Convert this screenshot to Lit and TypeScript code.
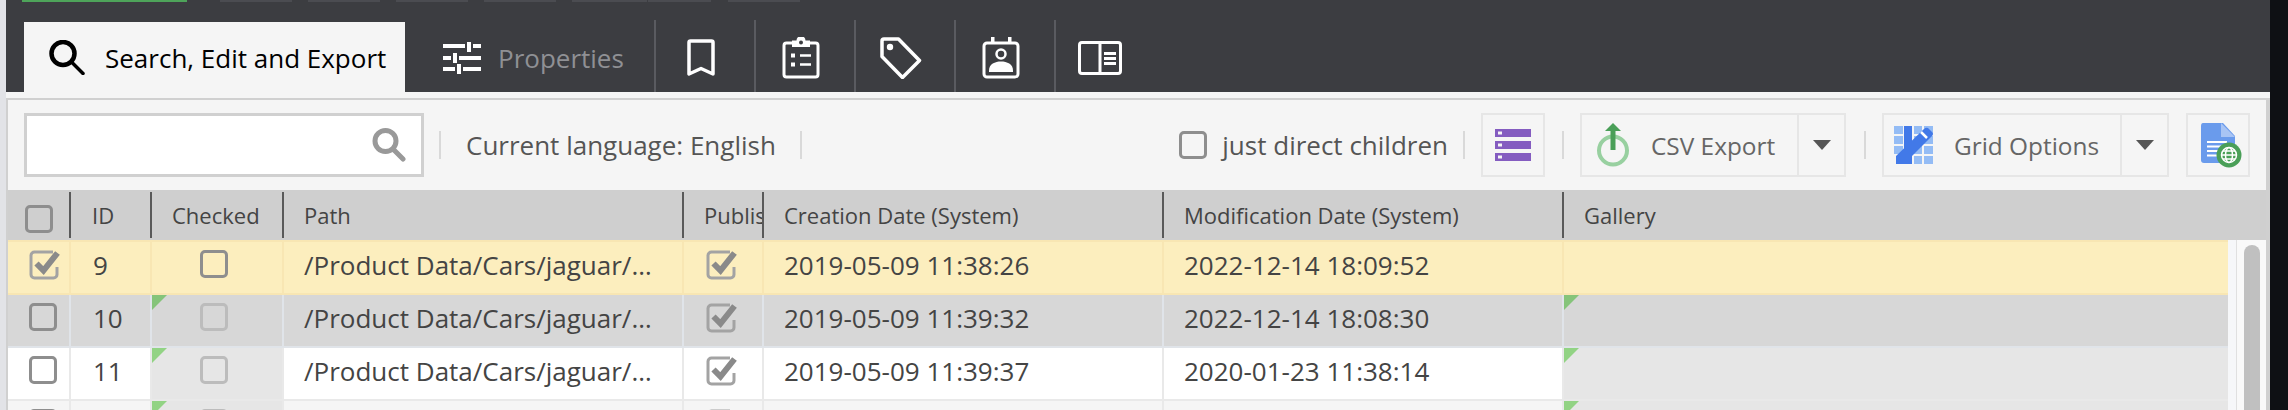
import { LitElement, html, css, nothing } from "lit";
import { customElement } from "lit/decorators.js";

const checkMark = html`<svg class="checkmark" viewBox="0 0 36 30" width="36" height="30">
  <path d="M24 2H5.5A3.5 3.5 0 0 0 2 5.500V24.500A3.500 3.500 0 0 0 5.500 28H24.500A3.500 3.500 0 0 0 28 24.500V17" fill="none" stroke="#a3a3a3" stroke-width="3"/>
  <path d="M7.500 13.500L14.500 20.500L28.500 3" fill="none" stroke="#8a8a8a" stroke-width="6"/>
</svg>`;

interface Row {
  id: string;
  created: string;
  modified: string;
  cls: string;
  selected?: boolean;
  flagged?: boolean;
  grayCells?: boolean;
}

const rows: Row[] = [
  { id: "9", created: "2019-05-09 11:38:26", modified: "2022-12-14 18:09:52", cls: "yellow", selected: true },
  { id: "10", created: "2019-05-09 11:39:32", modified: "2022-12-14 18:08:30", cls: "gray", flagged: true },
  { id: "11", created: "2019-05-09 11:39:37", modified: "2020-01-23 11:38:14", cls: "white", flagged: true, grayCells: true },
  { id: "", created: "", modified: "", cls: "light", flagged: true, grayCells: true },
];

@customElement("app-root")
export class AppRoot extends LitElement {
  static styles = css`
    :host { display: block; width: 2288px; height: 410px; overflow: hidden; background: #0e1014; font-family: "Open Sans", sans-serif; }
    * { box-sizing: border-box; }
    .app { display: flex; height: 410px; }
    .rail { width: 6px; background: #e2e3e7; }
    .main { width: 2264px; display: flex; flex-direction: column; }
    .top { height: 92px; background: #3c3d41; display: flex; flex-direction: column; flex: none; }
    .tasks { height: 2px; display: flex; padding-left: 16px; }
    .task { height: 2px; background: #4b4c51; width: 72px; margin-right: 16px; }
    .task.active { background: #4ea45a; width: 165px; margin-right: 33px; }
    .task.b { width: 75px; margin-right: 1px; }
    .task.c { width: 63px; margin-right: 17px; }
    .tabs { display: flex; margin-top: 20px; height: 70px; padding-left: 18px; }
    .tab { width: 100px; height: 72px; margin-top: -2px; border-right: 2px solid #5a5b60; display: flex; align-items: center; justify-content: center; padding: 4px 8px 0 0; flex: none; }
    .tab svg { display: block; }
    .tab.last { border-right: none; width: 100px; padding-right: 12px; }
    .tab.search { width: 381px; height: 70px; margin-top: 0; background: #f5f5f5; color: #000; border: none; justify-content: flex-start; padding: 1px 0 0 25px; font-size: 26px; gap: 20px; }
    .tab.props { width: 251px; justify-content: flex-start; padding: 4px 0 0 38px; gap: 17px; color: #8f9094; font-size: 26px; }
    .strip { height: 6px; background: #f5f5f5; flex: none; }
    .panel { flex: 1; min-height: 0; border: 2px solid #d0d0d0; border-width: 2px 4px 0 2px; display: flex; flex-direction: column; }
    .toolbar { height: 90px; flex: none; background: #f5f5f5; display: flex; align-items: center; padding: 0 16px; color: #555; font-size: 26px; }
    .input { width: 400px; height: 64px; background: #fff; border: 3px solid #d0d0d0; display: flex; align-items: center; justify-content: flex-end; padding-right: 15px; flex: none; }
    .sep { width: 2px; height: 28px; background: #d9d9d9; flex: none; }
    .sep.s15 { margin-left: 15px; }
    .sep.s18 { margin-left: 18px; }
    .lang { margin: 0 24px 0 25px; white-space: nowrap; }
    .spring { flex: 1; }
    .cb { width: 28px; height: 28px; border: 3px solid #8e8e8e; border-radius: 5px; flex: none; display: block; }
    .children { display: flex; align-items: center; gap: 15px; margin-right: 15px; white-space: nowrap; }
    .btn { height: 64px; border: 2px solid #e6e6e6; display: flex; align-items: center; flex: none; font-size: 24.400px; color: #666; margin-left: 16px; }
    .btn.icon { width: 64px; justify-content: center; margin-right: 17px; }
    .btn.doc { margin-left: 17px; justify-content: center; width: 64px; }
    .btn .label { display: flex; align-items: center; height: 100%; }
    .btn .caret { height: 100%; border-left: 2px solid #e6e6e6; display: flex; align-items: center; justify-content: center; flex: none; }
    .tri { width: 0; height: 0; border-left: 9px solid transparent; border-right: 9px solid transparent; border-top: 10px solid #555; }
    .csv { width: 266px; } .csv .label { width: 215px; padding-left: 14px; gap: 21px; } .csv .caret { width: 47px; }
    .grid { width: 287px; } .grid .label { width: 236px; padding-left: 10px; gap: 20px; } .grid .caret { width: 47px; }
    .docicon { margin: 2px 0 0 8px; }
    .head, .row { display: grid; grid-template-columns: 63px 81px 132px 400px 80px 400px 400px 664px; flex: none; }
    .headwrap { background: #cfcfcf; height: 50px; flex: none; }
    .head { height: 50px; align-items: center; color: #444; font-size: 22px; }
    .hc { height: 46px; border-right: 2px solid #5a5a5a; display: flex; align-items: center; padding-left: 20px; overflow: hidden; white-space: nowrap; }
    .hc:last-child { border-right: none; }
    .hc.first { padding: 8px 0 0 17px; }
    .hc.id { padding-left: 21px; }
    .body { flex: 1; min-height: 0; display: flex; overflow: hidden; }
    .rows { width: 2220px; flex: none; }
    .row { height: 53px; color: #444; font-size: 26px; }
    .row.yellow { height: 55px; }
    .cell { height: 100%; border-right: 2px solid #e9e9e9; border-bottom: 2px solid #e9e9e9; position: relative; display: flex; align-items: center; padding: 0 0 5px 20px; white-space: nowrap; overflow: hidden; }
    .cell:last-child { border-right: none; }
    .cell.id { padding-left: 22px; }
    .cell.box { align-items: flex-start; padding-top: 8px; padding-bottom: 0; }
    .yellow .cell { background: #fceebe; border-color: #f8e6b3; border-top: 2px solid #f8e6b3; }
    .gray .cell { background: #d7d7d7; border-color: #e0e4e9; }
    .white .cell { background: #fff; }
    .light .cell { background: #f5f5f5; }
    .white .cell.dirty, .light .cell.dirty { background: #e6e6e6; }
    .cell.first { padding-left: 21px; }
    .cell.chk { padding-left: 48px; }
    .cell.pub { padding-left: 22px; }
    .cb.soft { border-color: #bcbcbc; }
    .yellow .cb.soft { border-color: #8e8e8e; }
    .flag { position: absolute; left: 0; top: 0; width: 15px; height: 15px; clip-path: polygon(0 0, 100% 0, 0 100%); background: #92d384; }
    .gray .flag { background: #85c47a; }
    .checkmark { display: block; flex: none; }
    .scroll { flex: 1; display: flex; background: #f6f7f9; }
    .track { width: 9px; flex: none; border-right: 1px solid #e0e0e0; }
    .trackin { flex: 1; background: #f9f9f9; padding: 5px 0 0 7px; }
    .thumb { width: 16px; height: 300px; border-radius: 8px 8px 0 0; background: #c0c0c0; }
  `;

  private cells(r: Row) {
    const flag = r.flagged ? html`<span class="flag"></span>` : nothing;
    const dirty = r.grayCells ? "dirty" : "";
    return html`<div class="row ${r.cls}">
      <div class="cell box first">
        ${r.selected ? checkMark : html`<span class="cb"></span>`}
      </div>
      <div class="cell id">${r.id}</div>
      <div class="cell box chk ${dirty}">${flag}<span class="cb soft"></span></div>
      <div class="cell">${r.id ? "/Product Data/Cars/jaguar/…" : ""}</div>
      <div class="cell box pub">${checkMark}</div>
      <div class="cell">${r.created}</div>
      <div class="cell">${r.modified}</div>
      <div class="cell ${dirty}">${flag}</div>
    </div>`;
  }

  render() {
    return html`<div class="app">
      <div class="rail"></div>
      <div class="main">
        <div class="top">
          <div class="tasks">
            <span class="task active"></span><span class="task"></span><span class="task"></span><span class="task"></span><span class="task"></span><span class="task b"></span><span class="task c"></span><span class="task"></span>
          </div>
          <div class="tabs">
            <div class="tab search">
              <svg width="36" height="35" viewBox="0 0 36 35"><circle cx="14" cy="13.500" r="11.500" fill="none" stroke="#000" stroke-width="4.500"/><path d="M22.500 22L34 33.500" stroke="#000" stroke-width="3.500" stroke-linecap="round"/></svg>
              <span>Search, Edit and Export</span>
            </div>
            <div class="tab props">
              <svg width="38" height="34" viewBox="0 0 38 34" fill="none" stroke="#fff" stroke-width="4">
                <path d="M0 5H22M26 1V11M30 5H38M0 17H8M12 12V22M16 17H38M0 28H12M16 23V33M20 28H38"/>
              </svg>
              <span>Properties</span>
            </div>
            <div class="tab">
              <svg width="30" height="38" viewBox="0 0 30 38" fill="none" stroke="#fff" stroke-width="3.500" stroke-linejoin="round"><path d="M3 3.500Q3 2 4.500 2H25.500Q27 2 27 3.500V35L15 29.500L3 35Z"/></svg>
            </div>
            <div class="tab">
              <svg width="38" height="42" viewBox="0 0 38 42"><path d="M10 6H4.500Q2 6 2 8.500V37.500Q2 40 4.500 40H33.500Q36 40 36 37.500V8.500Q36 6 33.500 6H28" fill="none" stroke="#fff" stroke-width="3"/><path d="M10 3.500H14.500A4.500 4.500 0 0 1 23.500 3.500H28V10H10Z" fill="#fff"/><circle cx="19" cy="5.500" r="2" fill="#3c3d41"/><path d="M9 16.500h4v4h-4zM9 25.500h4v4h-4z" fill="#fff"/><path d="M18 18.500H29M18 27.500H29" stroke="#fff" stroke-width="2.500"/></svg>
            </div>
            <div class="tab">
              <svg width="42" height="42" viewBox="0 0 42 42" fill="none" stroke="#fff" stroke-width="3.500" stroke-linejoin="round"><path d="M2 4Q2 2 4 2H18.500L39.500 23.500L22.500 40.500L2 19.500Z"/><circle cx="10" cy="10" r="3.200" fill="#fff" stroke="none"/></svg>
            </div>
            <div class="tab">
              <svg width="38" height="42" viewBox="0 0 38 42"><rect x="2" y="6" width="34" height="34" rx="3" fill="none" stroke="#fff" stroke-width="3"/><path d="M9 0h3.500v6H9zM26 0h3.500v6H26z" fill="#fff"/><circle cx="19" cy="17" r="4.500" fill="none" stroke="#fff" stroke-width="2.500"/><path d="M7 35V33.500C7 27 13 24.500 19 24.500S31 27 31 33.500V35Z" fill="#fff"/></svg>
            </div>
            <div class="tab last">
              <svg width="44" height="34" viewBox="0 0 44 34" fill="none" stroke="#fff" stroke-width="3"><rect x="1.500" y="1.500" width="41" height="31" rx="2.500"/><path d="M22 2V32M26 12.500H38M26 17.500H38M26 22.500H38"/></svg>
            </div>
          </div>
        </div>
        <div class="strip"></div>
        <div class="panel">
          <div class="toolbar">
            <div class="input">
              <svg width="34" height="34" viewBox="0 0 34 34"><circle cx="13.500" cy="13" r="10.500" fill="none" stroke="#999" stroke-width="5"/><path d="M21 21L31 31" stroke="#999" stroke-width="5" stroke-linecap="round"/></svg>
            </div>
            <span class="sep s15"></span>
            <span class="lang">Current language: English</span>
            <span class="sep"></span>
            <span class="spring"></span>
            <div class="children"><span class="cb"></span><span>just direct children</span></div>
            <span class="sep"></span>
            <div class="btn icon">
              <svg width="36" height="32" viewBox="0 0 36 32"><path fill="#845cc0" fill-rule="evenodd" d="M0 0h36v8H0zM3 2.500v3h4v-3zM0 12h36v8H0zM3 14.500v3h4v-3zM0 24h36v8H0zM3 26.500v3h4v-3z"/></svg>
            </div>
            <span class="sep"></span>
            <div class="btn csv">
              <div class="label">
                <svg width="34" height="44" viewBox="0 0 34 44"><circle cx="17" cy="27.500" r="14" fill="none" stroke="#98d0a0" stroke-width="4"/><path d="M17 0L25 8H9Z" fill="#4a9f58"/><rect x="14.500" y="8" width="5" height="19" fill="#4a9f58"/></svg>
                <span>CSV Export</span>
              </div>
              <div class="caret"><span class="tri"></span></div>
            </div>
            <span class="sep s18"></span>
            <div class="btn grid">
              <div class="label">
                <svg width="40" height="40" viewBox="0 0 40 40">
                  <path fill="#94bcf5" d="M0 1h9v8H0zM20 1h8v8h-8zM30 1h9v8h-9zM0 11h9v8H0zM20 11h8v8h-8zM30 11h9v8h-9zM0 21h9v8H0zM20 21h8v8h-8zM30 21h9v8h-9zM20 31h8v8h-8zM30 31h9v8h-9z"/>
                  <path fill="#4279e8" d="M10 1h8v38h-8zM2 31L30 4Q32 2 34 3L38 7Q40 9 38 11L10 39H2Z"/>
                  <path d="M26 11L32 17" stroke="#fff" stroke-width="2.500" transform="translate(1 -4)"/>
                </svg>
                <span>Grid Options</span>
              </div>
              <div class="caret"><span class="tri"></span></div>
            </div>
            <div class="btn doc">
              <svg class="docicon" width="42" height="46" viewBox="0 0 42 46">
                <path fill="#6a9bec" d="M2 0H22L34 13V37Q34 40 31 40H3Q0 40 0 37V3Q0 0 2 0Z"/>
                <path fill="#a8c4f4" d="M20 0L34 14H20Z"/>
                <path d="M6 19H26M6 23.500H26M6 28H26M6 32.500H18" stroke="#fff" stroke-width="2"/>
                <circle cx="28" cy="32" r="12.500" fill="#4a9f58"/>
                <g fill="none" stroke="#fff" stroke-width="1.500"><circle cx="28" cy="32" r="7.500"/><ellipse cx="28" cy="32" rx="3.500" ry="7.500"/><path d="M20.500 32H35.500M22 28H34M22 36H34"/></g>
              </svg>
            </div>
          </div>
          <div class="headwrap">
            <div class="head">
              <div class="hc first"><span class="cb"></span></div>
              <div class="hc id">ID</div>
              <div class="hc">Checked</div>
              <div class="hc">Path</div>
              <div class="hc">Published</div>
              <div class="hc">Creation Date (System)</div>
              <div class="hc">Modification Date (System)</div>
              <div class="hc">Gallery</div>
            </div>
          </div>
          <div class="body">
            <div class="rows">${rows.map((r) => this.cells(r))}</div>
            <div class="scroll">
              <div class="track"></div>
              <div class="trackin"><div class="thumb"></div></div>
            </div>
          </div>
        </div>
      </div>
    </div>`;
  }
}
